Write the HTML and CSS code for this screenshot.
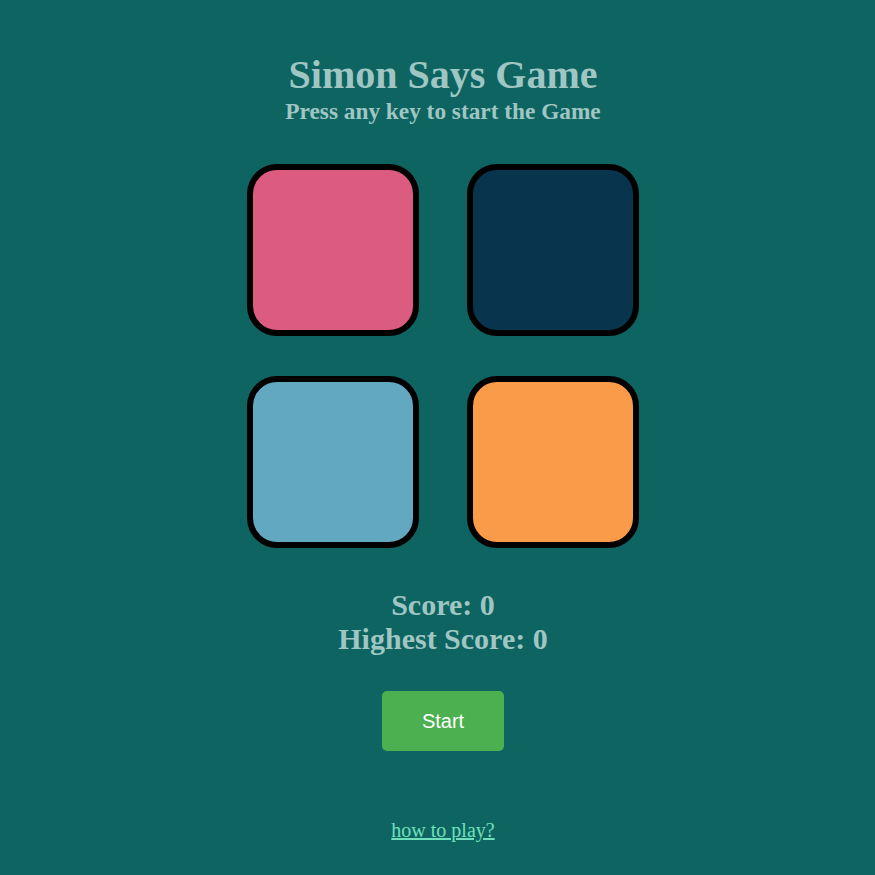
FILE: index.html
```html
<!DOCTYPE html>
<html>
<head>
<meta charset="utf-8">
<link rel="stylesheet" href="styles.css">
</head>
<body>
<main class="page">
  <h1 class="title">Simon Says Game</h1>
  <h3 class="subtitle">Press any key to start the Game</h3>
  <div class="board">
    <div class="pad pink"></div>
    <div class="pad navy"></div>
    <div class="pad blue"></div>
    <div class="pad orange"></div>
  </div>
  <div class="scores">
    <div class="score">Score: 0</div>
    <div class="score">Highest Score: 0</div>
  </div>
  <button class="start">Start</button>
  <a class="howto" href="#">how to play?</a>
</main>
</body>
</html>
```
FILE: styles.css
```css
html, body {
  margin: 0;
  padding: 0;
  background: #0e6461;
}
body {
  font-family: "Liberation Serif", "Times New Roman", serif;
  color: #9fc6c3;
}
.page {
  display: flex;
  flex-direction: column;
  align-items: center;
  padding: 52px 0 0 11px;
}
.title {
  margin: 0;
  font-size: 40px;
  line-height: 46px;
  font-weight: bold;
}
.subtitle {
  margin: 0;
  font-size: 23.3px;
  line-height: 26px;
  font-weight: bold;
}
.board {
  margin-top: 40px;
  display: grid;
  grid-template-columns: 172px 172px;
  column-gap: 48px;
  row-gap: 40px;
}
.pad {
  box-sizing: border-box;
  width: 172px;
  height: 172px;
  border: 6px solid #000;
  border-radius: 30px;
}
.pink { background: #db5c80; }
.navy { background: #08354d; }
.blue { background: #62a8c0; }
.orange { background: #f99b48; }
.scores {
  margin-top: 40px;
  display: flex;
  flex-direction: column;
  align-items: center;
}
.score {
  font-size: 30px;
  font-weight: bold;
  line-height: 34px;
}
.start {
  margin-top: 35px;
  width: 122px;
  height: 60px;
  border: none;
  border-radius: 5px;
  background: #4caf50;
  color: #fff;
  font-family: "Liberation Sans", Arial, sans-serif;
  font-size: 20px;
  cursor: pointer;
}
.howto {
  margin-top: 68px;
  font-size: 20px;
  line-height: 23px;
  color: #6fe0bb;
}
```
